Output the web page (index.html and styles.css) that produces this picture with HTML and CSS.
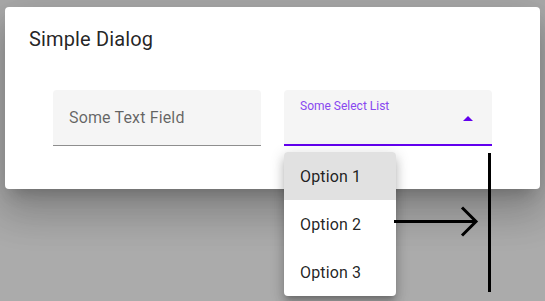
FILE: index.html
```html
<!DOCTYPE html>
<html>
<head>
<meta charset="utf-8">
<link rel="stylesheet" href="styles.css">
</head>
<body>
<div class="dialog">
  <div class="title">Simple Dialog</div>
  <div class="fields">
    <div class="field text-field">
      <span class="placeholder">Some Text Field</span>
    </div>
    <div class="field select-field">
      <span class="select-label">Some Select List</span>
      <span class="caret"></span>
      <ul class="menu">
        <li class="option selected">Option 1</li>
        <li class="option">Option 2</li>
        <li class="option">Option 3</li>
      </ul>
    </div>
  </div>
</div>
<svg class="annotation" width="545" height="301" viewBox="0 0 545 301">
  <line x1="394" y1="221.5" x2="476" y2="221.5" stroke="#000" stroke-width="3"/>
  <polyline points="462,207.5 476,221.5 462,235.5" fill="none" stroke="#000" stroke-width="3"/>
  <line x1="489.5" y1="153" x2="489.5" y2="292" stroke="#000" stroke-width="3"/>
</svg>
</body>
</html>
```
FILE: styles.css
```css
html, body {
  margin: 0;
  padding: 0;
}
body {
  width: 545px;
  height: 301px;
  overflow: hidden;
  background: #ababab;
  font-family: Roboto, "Liberation Sans", Arial, sans-serif;
  padding: 7px 5px 0;
  box-sizing: border-box;
  position: relative;
}
.dialog {
  width: 535px;
  height: 182px;
  background: #fff;
  border-radius: 4px;
  box-shadow: 0 11px 15px -7px rgba(0,0,0,.2), 0 24px 38px 3px rgba(0,0,0,.14), 0 9px 46px 8px rgba(0,0,0,.12);
  display: flex;
  flex-direction: column;
}
.title {
  padding: 22px 24px 0;
  font-size: 20px;
  line-height: 20px;
  color: rgba(0,0,0,.87);
  letter-spacing: 0.15px;
}
.fields {
  display: flex;
  gap: 23px;
  margin: 41px 0 0 48px;
}
.field {
  width: 208px;
  height: 56px;
  box-sizing: border-box;
  background: #f5f5f5;
  border-radius: 4px 4px 0 0;
  position: relative;
}
.text-field {
  border-bottom: 1px solid rgba(0,0,0,.42);
  display: flex;
  align-items: center;
  padding-left: 16px;
}
.placeholder {
  font-size: 16px;
  color: rgba(0,0,0,.6);
  letter-spacing: 0.15px;
}
.select-field {
  border-bottom: 2px solid #6200ee;
  display: flex;
  flex-direction: column;
  padding: 10px 19px 0 16px;
}
.select-label {
  font-size: 12px;
  line-height: 12px;
  color: #8848f0;
}
.caret {
  align-self: flex-end;
  margin-top: 4px;
  width: 0;
  height: 0;
  border-left: 5px solid transparent;
  border-right: 5px solid transparent;
  border-bottom: 5px solid #6200ee;
}
.menu {
  position: absolute;
  left: 0;
  top: 62px;
  width: 112px;
  margin: 0;
  padding: 0;
  list-style: none;
  background: #fff;
  border-radius: 4px;
  overflow: hidden;
  box-shadow: 0 5px 5px -3px rgba(0,0,0,.2), 0 8px 10px 1px rgba(0,0,0,.14), 0 3px 14px 2px rgba(0,0,0,.12);
}
.option {
  height: 48px;
  display: flex;
  align-items: center;
  padding-left: 16px;
  font-size: 16px;
  color: rgba(0,0,0,.87);
  letter-spacing: 0.15px;
}
.option.selected {
  background: #e1e1e1;
}
.annotation {
  position: absolute;
  left: 0;
  top: 0;
}
```
